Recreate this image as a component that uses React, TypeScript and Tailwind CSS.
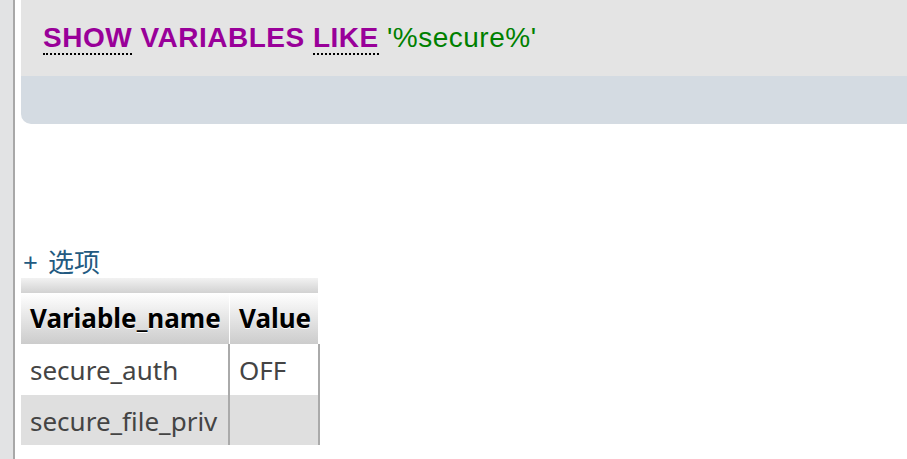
import React from "react";

const sans = { fontFamily: '"Noto Sans", "Noto Sans CJK SC", sans-serif' };

export default function App() {
  return (
    <div className="flex h-[459px] w-[907px] overflow-hidden bg-white">
      <div className="w-[13px] shrink-0 bg-[#e2e3e4]" />
      <div className="w-[2px] shrink-0 bg-[#a8a8a8]" />
      <div className="ml-[6px] flex min-w-0 flex-1 flex-col">
        <div className="overflow-hidden rounded-bl-[10px]">
          <div className="h-[76px] bg-[#e4e4e4] pl-[22px] pt-[22px]">
            <div
              className="whitespace-nowrap text-[28px] leading-[32px] tracking-[0.5px]"
              style={{ fontFamily: '"Liberation Sans", Arial, sans-serif' }}
            >
              <span className="border-b-2 border-dotted border-black font-bold text-[#990099]">SHOW</span>{" "}
              <span className="font-bold text-[#990099]">VARIABLES</span>{" "}
              <span className="border-b-2 border-dotted border-black font-bold text-[#990099]">LIKE</span>{" "}
              <span className="text-[#008000]">'%secure%'</span>
            </div>
          </div>
          <div className="h-[48px] bg-[#d4dbe2]" />
        </div>

        <div className="mt-[123px] pl-[2px] text-[26px] leading-[30px] text-[#235a81]" style={sans}>
          +<span className="ml-[10px]">选项</span>
        </div>

        <div className="mt-[1px] w-[299px]" style={sans}>
          <div className="h-[15px] w-[297px] bg-gradient-to-b from-[#f2f2f2] to-[#d2d2d2]" />
          <div className="flex h-[51px] w-[297px] bg-gradient-to-b from-white to-[#cccccc] text-[26px] font-bold text-black [text-shadow:0_1px_0_#fff]">
            <div className="flex w-[208px] items-center pl-[9px]">Variable_name</div>
            <div className="w-[1px] bg-white" />
            <div className="flex flex-1 items-center pl-[9px]">Value</div>
          </div>
          <div className="flex h-[51px] bg-white text-[26px] text-[#444444]">
            <div className="flex w-[207px] items-center pl-[9px] pt-[2px]">secure_auth</div>
            <div className="w-[2px] bg-[#aaaaaa]" />
            <div className="flex w-[88px] items-center pl-[9px] pt-[2px]">OFF</div>
            <div className="w-[2px] bg-[#aaaaaa]" />
          </div>
          <div className="flex h-[50px] bg-[#dfdfdf] text-[26px] text-[#444444]">
            <div className="flex w-[207px] items-center pl-[9px] pt-[2px]">secure_file_priv</div>
            <div className="w-[2px] bg-[#aaaaaa]" />
            <div className="flex w-[88px] items-center pl-[9px]"></div>
            <div className="w-[2px] bg-[#aaaaaa]" />
          </div>
        </div>
      </div>
    </div>
  );
}
